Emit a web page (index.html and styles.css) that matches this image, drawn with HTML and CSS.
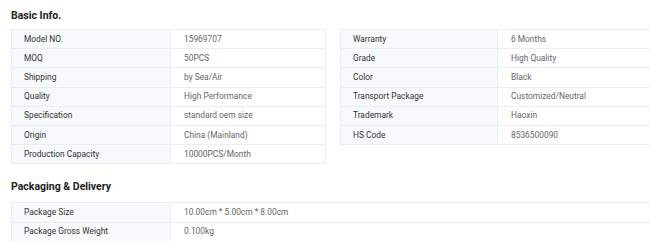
FILE: index.html
```html
<!DOCTYPE html>
<html>
<head>
<meta charset="utf-8">
<link rel="stylesheet" href="styles.css">
</head>
<body>
<div class="page">
  <h2 class="title">Basic Info.</h2>
  <div class="cols">
    <table class="info">
      <tr><td class="k">Model NO.</td><td class="v">15969707</td></tr>
      <tr><td class="k">MOQ</td><td class="v">50PCS</td></tr>
      <tr><td class="k">Shipping</td><td class="v">by Sea/Air</td></tr>
      <tr><td class="k">Quality</td><td class="v">High Performance</td></tr>
      <tr><td class="k">Specification</td><td class="v">standard oem size</td></tr>
      <tr><td class="k">Origin</td><td class="v">China (Mainland)</td></tr>
      <tr><td class="k">Production Capacity</td><td class="v">10000PCS/Month</td></tr>
    </table>
    <table class="info">
      <tr><td class="k">Warranty</td><td class="v">6 Months</td></tr>
      <tr><td class="k">Grade</td><td class="v">High Quality</td></tr>
      <tr><td class="k">Color</td><td class="v">Black</td></tr>
      <tr><td class="k">Transport Package</td><td class="v">Customized/Neutral</td></tr>
      <tr><td class="k">Trademark</td><td class="v">Haoxin</td></tr>
      <tr><td class="k">HS Code</td><td class="v">8536500090</td></tr>
    </table>
  </div>
  <h2 class="title second">Packaging &amp; Delivery</h2>
  <table class="info wide">
    <tr><td class="k">Package Size</td><td class="v">10.00cm * 5.00cm * 8.00cm</td></tr>
    <tr><td class="k">Package Gross Weight</td><td class="v">0.100kg</td></tr>
  </table>
</div>
</body>
</html>
```
FILE: styles.css
```css
html, body {
  margin: 0;
  padding: 0;
  background: #ffffff;
  overflow: hidden;
}
body {
  font-family: Roboto, "Liberation Sans", sans-serif;
  color: #333;
}
.page {
  width: 639px;
  height: 232px;
  overflow: hidden;
  padding: 9px 0 0 11px;
}
.title {
  margin: 0;
  font-size: 10.5px;
  line-height: 14px;
  font-weight: 700;
  color: #222;
  height: 20px;
}
.title.second {
  margin-top: 16px;
  height: 22px;
}
.cols {
  display: flex;
  gap: 14px;
  align-items: flex-start;
}
.info {
  border-collapse: collapse;
  width: 315px;
  flex: none;
  table-layout: fixed;
  font-size: 8.4px;
}
.info.wide {
  width: 680px;
}
.info td {
  border: 1px solid #e9edf4;
  height: 19.2px;
  padding: 0 0 0 12px;
  box-sizing: border-box;
  line-height: 17px;
  white-space: nowrap;
}
.info .k {
  width: 159px;
  background: #f8f9fc;
  color: #333;
}
.info .v {
  background: #fff;
  color: #666;
  padding-left: 13px;
}
.cols .info:last-child .k {
  width: 157px;
}
```
